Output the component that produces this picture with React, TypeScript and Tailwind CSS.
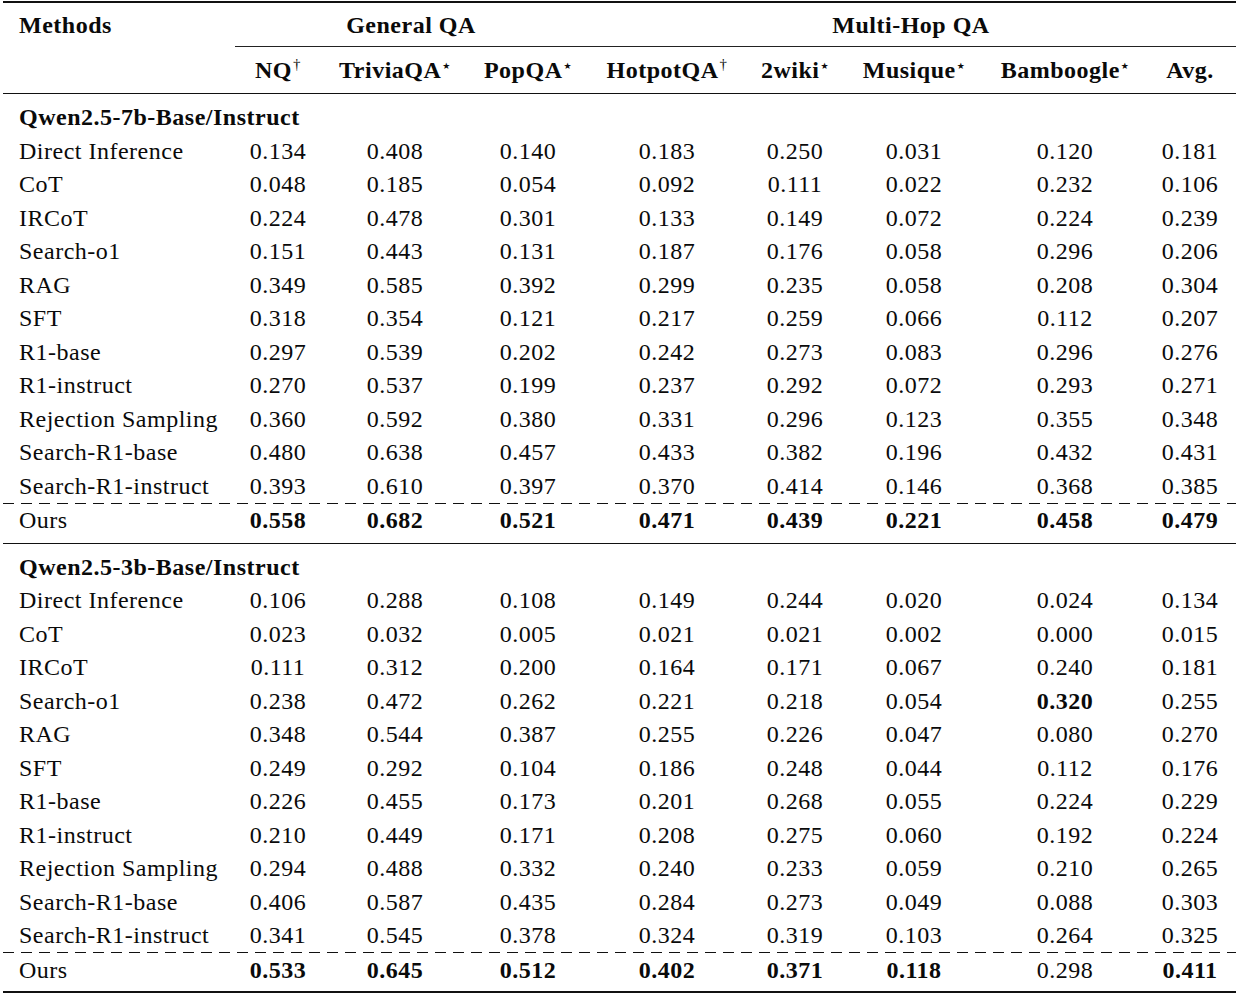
const cols = ["NQ", "TriviaQA", "PopQA", "HotpotQA", "2wiki", "Musique", "Bamboogle", "Avg."];
const marks = ["†", "⋆", "⋆", "†", "⋆", "⋆", "⋆", ""];

type Row = { name: string; vals: string[]; bold?: number[] };

const section7b: Row[] = [
  { name: "Direct Inference", vals: ["0.134", "0.408", "0.140", "0.183", "0.250", "0.031", "0.120", "0.181"] },
  { name: "CoT", vals: ["0.048", "0.185", "0.054", "0.092", "0.111", "0.022", "0.232", "0.106"] },
  { name: "IRCoT", vals: ["0.224", "0.478", "0.301", "0.133", "0.149", "0.072", "0.224", "0.239"] },
  { name: "Search-o1", vals: ["0.151", "0.443", "0.131", "0.187", "0.176", "0.058", "0.296", "0.206"] },
  { name: "RAG", vals: ["0.349", "0.585", "0.392", "0.299", "0.235", "0.058", "0.208", "0.304"] },
  { name: "SFT", vals: ["0.318", "0.354", "0.121", "0.217", "0.259", "0.066", "0.112", "0.207"] },
  { name: "R1-base", vals: ["0.297", "0.539", "0.202", "0.242", "0.273", "0.083", "0.296", "0.276"] },
  { name: "R1-instruct", vals: ["0.270", "0.537", "0.199", "0.237", "0.292", "0.072", "0.293", "0.271"] },
  { name: "Rejection Sampling", vals: ["0.360", "0.592", "0.380", "0.331", "0.296", "0.123", "0.355", "0.348"] },
  { name: "Search-R1-base", vals: ["0.480", "0.638", "0.457", "0.433", "0.382", "0.196", "0.432", "0.431"] },
  { name: "Search-R1-instruct", vals: ["0.393", "0.610", "0.397", "0.370", "0.414", "0.146", "0.368", "0.385"] },
];
const ours7b: Row = { name: "Ours", vals: ["0.558", "0.682", "0.521", "0.471", "0.439", "0.221", "0.458", "0.479"], bold: [0, 1, 2, 3, 4, 5, 6, 7] };

const section3b: Row[] = [
  { name: "Direct Inference", vals: ["0.106", "0.288", "0.108", "0.149", "0.244", "0.020", "0.024", "0.134"] },
  { name: "CoT", vals: ["0.023", "0.032", "0.005", "0.021", "0.021", "0.002", "0.000", "0.015"] },
  { name: "IRCoT", vals: ["0.111", "0.312", "0.200", "0.164", "0.171", "0.067", "0.240", "0.181"] },
  { name: "Search-o1", vals: ["0.238", "0.472", "0.262", "0.221", "0.218", "0.054", "0.320", "0.255"], bold: [6] },
  { name: "RAG", vals: ["0.348", "0.544", "0.387", "0.255", "0.226", "0.047", "0.080", "0.270"] },
  { name: "SFT", vals: ["0.249", "0.292", "0.104", "0.186", "0.248", "0.044", "0.112", "0.176"] },
  { name: "R1-base", vals: ["0.226", "0.455", "0.173", "0.201", "0.268", "0.055", "0.224", "0.229"] },
  { name: "R1-instruct", vals: ["0.210", "0.449", "0.171", "0.208", "0.275", "0.060", "0.192", "0.224"] },
  { name: "Rejection Sampling", vals: ["0.294", "0.488", "0.332", "0.240", "0.233", "0.059", "0.210", "0.265"] },
  { name: "Search-R1-base", vals: ["0.406", "0.587", "0.435", "0.284", "0.273", "0.049", "0.088", "0.303"] },
  { name: "Search-R1-instruct", vals: ["0.341", "0.545", "0.378", "0.324", "0.319", "0.103", "0.264", "0.325"] },
];
const ours3b: Row = { name: "Ours", vals: ["0.533", "0.645", "0.512", "0.402", "0.371", "0.118", "0.298", "0.411"], bold: [0, 1, 2, 3, 4, 5, 7] };

const grid = "grid grid-cols-[232px_86px_148px_118px_160px_96px_142px_160px_90px]";

const DataRow = ({ row }: { row: Row }) => (
  <div className={`${grid} h-[33.5px] items-center`}>
    <div className="pl-[16px] whitespace-nowrap">{row.name}</div>
    {row.vals.map((v, i) => (
      <div key={i} className={`text-center ${row.bold?.includes(i) ? "font-bold" : ""}`}>
        {v}
      </div>
    ))}
  </div>
);

const Dashed = () => (
  <div className="h-px bg-[repeating-linear-gradient(to_right,#111_0_11px,transparent_11px_18px)]" />
);

const Section = ({ title, rows, ours }: { title: string; rows: Row[]; ours: Row }) => (
  <div>
    <div className="h-[40px] pt-[6px] flex items-center pl-[16px] font-bold">{title}</div>
    {rows.map((r) => (
      <DataRow key={r.name} row={r} />
    ))}
    <Dashed />
    <DataRow row={ours} />
  </div>
);

export default function App() {
  return (
    <div className="w-[1239px] h-[996px] bg-white text-[#0a0a0a] [font-family:'Liberation_Serif','Times_New_Roman',Times,serif] text-[24px] tracking-[0.5px] leading-none">
      <div className="ml-[3px] w-[1233px] pt-px">
        <div className="h-[2px] bg-[#111]" />
        <div className={`${grid} h-[43px] items-center font-bold`}>
          <div className="pl-[16px]">Methods</div>
          <div className="col-span-3 text-center">General QA</div>
          <div className="col-span-5 text-center">Multi-Hop QA</div>
        </div>
        <div className="flex">
          <div className="w-[232px]" />
          <div className="flex-1 h-px bg-[#222]" />
        </div>
        <div className={`${grid} h-[46px] items-center font-bold`}>
          <div />
          {cols.map((c, i) => (
            <div key={c} className="text-center whitespace-nowrap">
              {c}
              {marks[i] === "†" && (
                <span className="relative -top-[9px] text-[15px] font-normal ml-px">†</span>
              )}
              {marks[i] === "⋆" && (
                <span className="relative -top-[9px] ml-px text-[9px] font-normal [font-family:'DejaVu_Sans',sans-serif]">★</span>
              )}
            </div>
          ))}
        </div>
        <div className="h-px bg-[#111]" />
        <Section title="Qwen2.5-7b-Base/Instruct" rows={section7b} ours={ours7b} />
        <div className="h-[5.5px]" />
        <div className="h-px bg-[#111]" />
        <Section title="Qwen2.5-3b-Base/Instruct" rows={section3b} ours={ours3b} />
        <div className="h-[4.5px]" />
        <div className="h-[2px] bg-[#111]" />
      </div>
    </div>
  );
}
